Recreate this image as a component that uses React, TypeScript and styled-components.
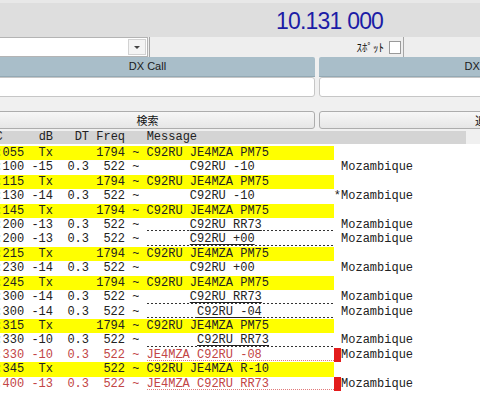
import React from 'react';
import styled, { createGlobalStyle } from 'styled-components';

const Global = createGlobalStyle`
  html, body { margin: 0; padding: 0; }
  body {
    width: 480px; height: 394px; overflow: hidden; background: #f0f0f0;
    font-family: "Liberation Sans", Arial, sans-serif;
  }
`;

const Window = styled.div`
  width: 480px; height: 394px; overflow: hidden;
  display: flex; flex-direction: column; background: #f0f0f0;
`;

const TopBar = styled.div`
  height: 34px; border-top: 3px solid #e8e8e8; background: #dedede;
  display: flex; align-items: center; padding-left: 276px; flex-shrink: 0;
`;

const Frequency = styled.div`
  font-family: "Liberation Sans", Arial, sans-serif;
  font-size: 23px; letter-spacing: -0.8px; color: #1c1ca6; line-height: 1;
  padding-top: 2px;
`;

const ControlRow = styled.div`
  height: 20px; display: flex; align-items: stretch; flex-shrink: 0; background: #eeeeee;
`;

const Combo = styled.div`
  width: 150px; margin-left: -2px; box-sizing: border-box;
  background: #fff; border: 1px solid #b4b4b4; display: flex; justify-content: flex-end;
`;

const ComboArrow = styled.div`
  width: 18px; margin: 1px; box-sizing: border-box; background: #f4f4f4;
  border: 1px solid #d2d2d2; display: flex; align-items: center; justify-content: center;
  &::after {
    content: ""; border-left: 3px solid transparent; border-right: 3px solid transparent;
    border-top: 3px solid #444;
  }
`;

const VLine = styled.div`
  width: 1px; background: #a6a6a6; margin-left: 1px;
`;

const Spacer = styled.div` flex: 1; `;

const SpotLabel = styled.div`
  font-family: "Noto Sans CJK JP", sans-serif; font-size: 11px; color: #111;
  display: flex; align-items: center; margin-right: 5px;
`;

const CheckBox = styled.div`
  width: 12px; height: 13px; box-sizing: border-box; align-self: center;
  background: #fff; border: 1px solid #9a9a9a; margin-right: 1px;
`;

const Trailing = styled.div` width: 76px; `;

const PanelsRow = styled.div`
  display: flex; gap: 4px; margin-left: -20px; flex-shrink: 0;
`;

const Panel = styled.div<{ $w: number }>`
  width: ${p => p.$w}px; flex-shrink: 0; display: flex; flex-direction: column;
`;

const PanelHeader = styled.div<{ $pr?: number }>`
  height: 20px; box-sizing: border-box; background: #a9bec9;
  border-bottom: 1px solid #93a9b4; border-radius: 2px 2px 0 0;
  font-size: 11px; color: #1a1a1a; line-height: 19px; text-align: center;
  padding-right: ${p => p.$pr ?? 0}px; white-space: nowrap;
`;

const Input = styled.div`
  height: 20px; box-sizing: border-box; background: #fff;
  border: 1px solid #c6c6c6; border-radius: 3px;
`;

const Button = styled.div<{ $pr?: number }>`
  height: 18px; margin-top: 14px; box-sizing: border-box;
  background: linear-gradient(#f7f7f7, #e6e6e6);
  border: 1px solid #adadad; border-radius: 3px;
  font-family: "Noto Sans CJK JP", sans-serif; font-size: 11px; color: #111;
  line-height: 16px; text-align: center; white-space: nowrap;
  padding-right: ${p => p.$pr ?? 0}px;
`;

const Table = styled.div`
  margin-top: 2px; margin-left: -4.6px; width: 484.6px; flex: 1;
  display: flex; flex-direction: column;
  font-family: "Liberation Mono", "Courier New", monospace; font-size: 12px;
`;

const HeaderRow = styled.div`
  height: 13px; display: flex; flex-shrink: 0;
`;

const HeaderMain = styled.div`
  width: 470.6px; background: #d4d4d4; line-height: 13px; white-space: pre; color: #222;
  overflow: hidden;
`;

const HeaderText = styled.span` margin-left: -2ch; display: inline-block; `;

const HeaderCorner = styled.div` flex: 1; background: #f0f0f0; `;

const Body = styled.div`
  flex: 1; background: #fff; padding-top: 1.8px;
`;

const Row = styled.div<{ $red?: boolean }>`
  height: 14.44px; display: flex; line-height: 15.5px; white-space: pre;
  color: ${p => (p.$red ? '#c24545' : '#222')};
`;

const Main = styled.div<{ $tx?: boolean }>`
  width: 47ch; display: flex; flex-shrink: 0;
  background: ${p => (p.$tx ? '#ffff00' : 'transparent')};
`;

const Cell = styled.span<{ $w: number; $right?: boolean }>`
  width: ${p => p.$w}ch; flex-shrink: 0; text-align: ${p => (p.$right ? 'right' : 'left')};
  overflow: hidden;
`;

const Message = styled.span<{ $line?: 'dashed' | 'red' }>`
  width: 26ch; flex-shrink: 0; overflow: hidden;
  background-repeat: repeat-x;
  background-position: 0 12.5px;
  background-size: ${p => (p.$line === 'red' ? '2px 1px' : '4px 1px')};
  background-image: ${p =>
    p.$line === 'dashed'
      ? 'linear-gradient(to right, #333 0 2px, transparent 2px 4px)'
      : p.$line === 'red'
      ? 'linear-gradient(to right, #e27a7a 0 1px, transparent 1px 2px)'
      : 'none'};
`;

const MsgText = styled.span<{ $line?: 'dashed' | 'red' }>`
  text-decoration: ${p => (p.$line === 'dashed' ? 'underline' : 'none')};
  text-decoration-thickness: 1px; text-underline-offset: 2px;
`;

const Marker = styled.span<{ $box?: boolean }>`
  width: 1ch; flex-shrink: 0; color: #222; position: relative;
  &::before {
    content: ""; display: ${p => (p.$box ? 'block' : 'none')};
    position: absolute; left: 0; top: 0.5px; width: 7px; height: 13.5px; background: #e31b1b;
  }
`;

const Country = styled.span` color: #222; `;

type Line = 'dashed' | 'red' | undefined;
interface Entry {
  t: string; db: string; dt?: string; f: string; msg: string;
  tx?: boolean; line?: Line; mark?: string; box?: boolean; c?: string;
}

const M = 'Mozambique';
const rows: Entry[] = [
  { t: ':055', db: 'Tx', f: '1794', msg: 'C92RU JE4MZA PM75', tx: true },
  { t: ':100', db: '-15', dt: '0.3', f: '522', msg: '      C92RU -10', c: M },
  { t: ':115', db: 'Tx', f: '1794', msg: 'C92RU JE4MZA PM75', tx: true },
  { t: ':130', db: '-14', dt: '0.3', f: '522', msg: '      C92RU -10', mark: '*', c: M },
  { t: ':145', db: 'Tx', f: '1794', msg: 'C92RU JE4MZA PM75', tx: true },
  { t: ':200', db: '-13', dt: '0.3', f: '522', msg: '      C92RU RR73', line: 'dashed', c: M },
  { t: ':200', db: '-13', dt: '0.3', f: '522', msg: '      C92RU +00', line: 'dashed', c: M },
  { t: ':215', db: 'Tx', f: '1794', msg: 'C92RU JE4MZA PM75', tx: true },
  { t: ':230', db: '-14', dt: '0.3', f: '522', msg: '      C92RU +00', c: M },
  { t: ':245', db: 'Tx', f: '1794', msg: 'C92RU JE4MZA PM75', tx: true },
  { t: ':300', db: '-14', dt: '0.3', f: '522', msg: '      C92RU RR73', line: 'dashed', c: M },
  { t: ':300', db: '-14', dt: '0.3', f: '522', msg: '       C92RU -04', line: 'dashed', c: M },
  { t: ':315', db: 'Tx', f: '1794', msg: 'C92RU JE4MZA PM75', tx: true },
  { t: ':330', db: '-10', dt: '0.3', f: '522', msg: '       C92RU RR73', line: 'dashed', c: M },
  { t: ':330', db: '-10', dt: '0.3', f: '522', msg: 'JE4MZA C92RU -08', line: 'red', box: true, c: M },
  { t: ':345', db: 'Tx', f: '522', msg: 'C92RU JE4MZA R-10', tx: true },
  { t: ':400', db: '-13', dt: '0.3', f: '522', msg: 'JE4MZA C92RU RR73', line: 'red', box: true, c: M },
];

function splitMsg(msg: string) {
  const m = msg.match(/^(\s*)(.*)$/);
  return { lead: m ? m[1] : '', text: m ? m[2] : msg };
}

export default function App() {
  return (
    <>
      <Global />
      <Window>
        <TopBar>
          <Frequency>10.131 000</Frequency>
        </TopBar>
        <ControlRow>
          <Combo><ComboArrow /></Combo>
          <VLine />
          <Spacer />
          <SpotLabel>ｽﾎﾟｯﾄ</SpotLabel>
          <CheckBox />
          <VLine />
          <Trailing />
        </ControlRow>
        <PanelsRow>
          <Panel $w={335}>
            <PanelHeader>DX Call</PanelHeader>
            <Input />
            <Button>検索</Button>
          </Panel>
          <Panel $w={342}>
            <PanelHeader $pr={12}>DX Grid</PanelHeader>
            <Input />
            <Button $pr={8}>追加</Button>
          </Panel>
        </PanelsRow>
        <Table>
          <HeaderRow>
            <HeaderMain>
              <HeaderText>{'UTC     dB   DT Freq   Message'}</HeaderText>
            </HeaderMain>
            <HeaderCorner />
          </HeaderRow>
          <Body>
            {rows.map((r, i) => {
              const { lead, text } = splitMsg(r.msg);
              return (
                <Row key={i} $red={r.line === 'red'}>
                  <Main $tx={r.tx}>
                    <Cell $w={4}>{r.t}</Cell>
                    <Cell $w={4} $right>{r.db}</Cell>
                    <Cell $w={5} $right>{r.dt ?? ''}</Cell>
                    <Cell $w={5} $right>{r.f}</Cell>
                    <Cell $w={2} $right>~</Cell>
                    <Cell $w={1}> </Cell>
                    <Message $line={r.line}>
                      {lead}
                      <MsgText $line={r.line}>{text}</MsgText>
                    </Message>
                  </Main>
                  <Marker $box={r.box}>{r.mark ?? ''}</Marker>
                  <Country>{r.c ?? ''}</Country>
                </Row>
              );
            })}
          </Body>
        </Table>
      </Window>
    </>
  );
}
